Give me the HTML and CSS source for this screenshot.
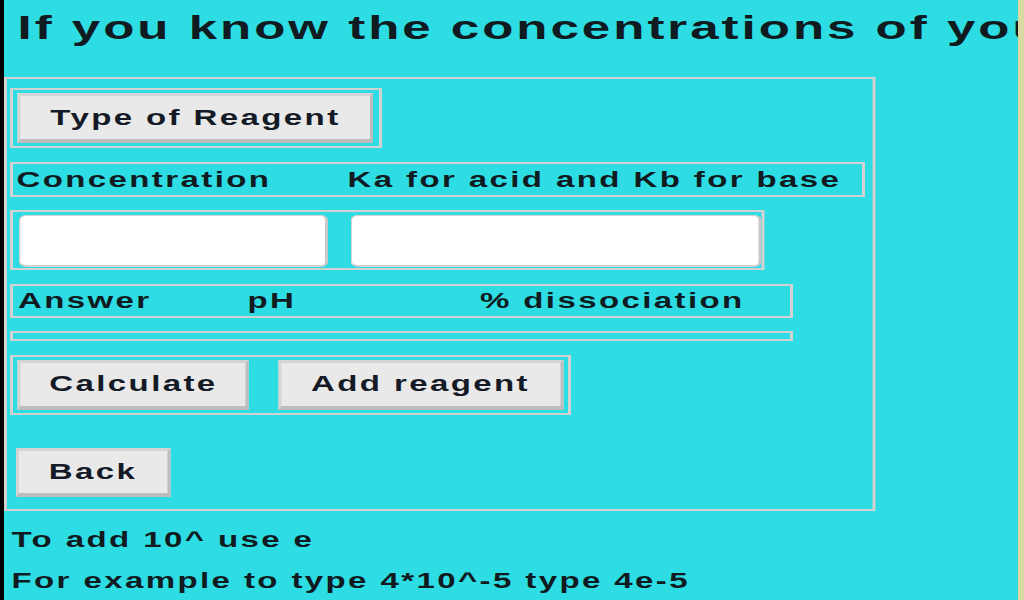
FILE: index.html
```html
<!DOCTYPE html>
<html lang="en">
<head>
<meta charset="utf-8">
<title>pH calculator</title>
<link rel="stylesheet" href="styles.css">
</head>
<body>
<div class="frame">
  <div class="edge-left"></div>
  <div class="viewport">
    <div class="page">
      <h1 class="title">If you know the concentrations of your reagents</h1>
      <div class="panel">
        <div class="box box-type"><button class="btn btn-type">Type of Reagent</button></div>
        <div class="box box-labels"><span>Concentration</span><span>Ka for acid and Kb for base</span></div>
        <div class="box box-inputs"><input class="field field-conc" type="text"><input class="field field-k" type="text"></div>
        <div class="box box-answer"><span>Answer</span><span>pH</span><span>% dissociation</span></div>
        <div class="box box-result"></div>
        <div class="box box-actions"><button class="btn btn-calc">Calculate</button><button class="btn btn-add">Add reagent</button></div>
        <button class="btn btn-back">Back</button>
      </div>
      <p class="note note-first">To add 10^ use e</p>
      <p class="note">For example to type 4*10^-5 type 4e-5</p>
    </div>
  </div>
  <div class="edge-right"></div>
</div>
</body>
</html>
```
FILE: styles.css
```css
html, body {
  margin: 0;
  padding: 0;
  height: 100%;
}

body {
  background: #2edce3;
  font-family: "Liberation Sans", Arial, sans-serif;
  overflow: hidden;
}

.frame {
  display: flex;
  height: 600px;
}

.edge-left {
  flex: none;
  width: 4px;
  background: #000;
}

.edge-right {
  flex: none;
  width: 6px;
  background: #d8daa2;
}

.viewport {
  flex: 1;
  overflow: hidden;
  background: #2edce3;
}

/* the source page is shown horizontally stretched */
.page {
  width: 676px;
  transform: scaleX(1.5);
  transform-origin: 0 0;
  color: #0f1b20;
  font-weight: bold;
  font-size: 22px;
  letter-spacing: 1.6px;
}

.title {
  margin: 0;
  padding: 7px 0 0 9px;
  font-size: 34px;
  line-height: 40px;
  letter-spacing: 2px;
  white-space: nowrap;
}

.panel {
  box-sizing: border-box;
  width: 581px;
  margin-top: 30px;
  border: 2px solid #d2d2d2;
  padding: 9px 2px 12px;
  display: flex;
  flex-direction: column;
  align-items: flex-start;
  gap: 13.5px;
}

.box {
  box-sizing: border-box;
  border: 2px solid #d2d2d2;
}

.box-type {
  width: 248px;
  height: 60px;
  padding: 3px 3.3px;
  display: flex;
}

.box-labels {
  width: 570px;
  height: 35px;
  padding-left: 2.3px;
  display: grid;
  grid-template-columns: 220.7px 1fr;
  line-height: 31px;
}

.box-inputs {
  width: 503px;
  height: 60px;
  padding: 3px 0 2px 4px;
  display: flex;
  gap: 15.3px;
}

.box-answer {
  width: 522px;
  height: 34px;
  padding-left: 3.3px;
  display: grid;
  grid-template-columns: 153px 155px 1fr;
  line-height: 30px;
}

.box-result {
  width: 522px;
  height: 10px;
}

.box-actions {
  width: 374px;
  height: 60px;
  padding: 3px 3.3px;
  display: flex;
  gap: 19.4px;
}

.field {
  box-sizing: border-box;
  height: 52px;
  margin: 0;
  padding: 0;
  background: #fff;
  border: 1px solid #d4d4d4;
  border-right: 2px solid #c8c8c8;
  border-bottom: 2px solid #d0d0d0;
  border-radius: 5px;
}

.field-conc {
  width: 206px;
}

.field-k {
  width: 274px;
}

.btn {
  box-sizing: border-box;
  height: 50px;
  margin: 0;
  padding: 0;
  background: #e9e9e9;
  border-style: solid;
  border-width: 3px 2px 4px;
  border-color: #d4d4d4 #bdbdbd #bdbdbd #d4d4d4;
  color: #141a26;
  font: inherit;
  letter-spacing: inherit;
  text-align: center;
}

.btn-type {
  width: 236.7px;
}

.btn-calc {
  width: 154px;
}

.btn-add {
  width: 190px;
}

.btn-back {
  width: 102.7px;
  height: 49px;
  margin: 19.5px 0 0 4px;
}

.note {
  margin: 0;
  padding-left: 5px;
  line-height: 41px;
}

.note-first {
  margin-top: 8.5px;
}
```
